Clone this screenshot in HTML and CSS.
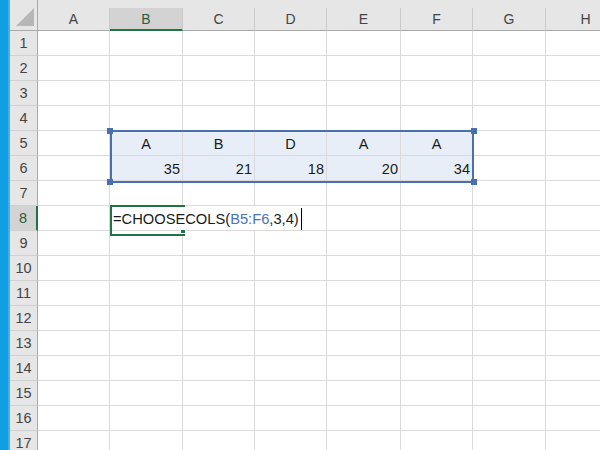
FILE: index.html
```html
<!DOCTYPE html>
<html lang="ja">
<head>
  <meta charset="UTF-8" />
  <title>CHOOSECOLS</title>
  <link rel="stylesheet" href="styles.css">
</head>
<body>

<div class="app">
  <div class="stripe"></div>

  <div class="sheet">
    <div class="head-row">
      <div class="corner"><span class="tri"></span></div>
      <div class="col-h w72">A</div>
      <div class="col-h w73 on">B</div>
      <div class="col-h w72">C</div>
      <div class="col-h w72">D</div>
      <div class="col-h w74">E</div>
      <div class="col-h w72">F</div>
      <div class="col-h w73">G</div>
      <div class="col-h wrest">H</div>
    </div>

    <div class="row"><div class="rh">1</div><div class="c w72"></div><div class="c w73"></div><div class="c w72"></div><div class="c w72"></div><div class="c w74"></div><div class="c w72"></div><div class="c w73"></div><div class="c wrest"></div></div>
    <div class="row"><div class="rh">2</div><div class="c w72"></div><div class="c w73"></div><div class="c w72"></div><div class="c w72"></div><div class="c w74"></div><div class="c w72"></div><div class="c w73"></div><div class="c wrest"></div></div>
    <div class="row"><div class="rh">3</div><div class="c w72"></div><div class="c w73"></div><div class="c w72"></div><div class="c w72"></div><div class="c w74"></div><div class="c w72"></div><div class="c w73"></div><div class="c wrest"></div></div>
    <div class="row"><div class="rh">4</div><div class="c w72"></div><div class="c w73"></div><div class="c w72"></div><div class="c w72"></div><div class="c w74"></div><div class="c w72"></div><div class="c w73"></div><div class="c wrest"></div></div>
    <div class="row">
      <div class="rh">5</div><div class="c w72"></div>
      <div class="c w73 sel mid">A</div>
      <div class="c w72 sel mid">B</div>
      <div class="c w72 sel mid">D</div>
      <div class="c w74 sel mid">A</div>
      <div class="c w72 sel mid">A</div>
      <div class="c w73"></div><div class="c wrest"></div>
    </div>
    <div class="row">
      <div class="rh">6</div><div class="c w72"></div>
      <div class="c w73 sel num">35</div>
      <div class="c w72 sel num">21</div>
      <div class="c w72 sel num">18</div>
      <div class="c w74 sel num">20</div>
      <div class="c w72 sel num">34</div>
      <div class="c w73"></div><div class="c wrest"></div>
    </div>
    <div class="row"><div class="rh">7</div><div class="c w72"></div><div class="c w73"></div><div class="c w72"></div><div class="c w72"></div><div class="c w74"></div><div class="c w72"></div><div class="c w73"></div><div class="c wrest"></div></div>
    <div class="row">
      <div class="rh on">8</div><div class="c w72"></div>
      <div class="c w73 active">
        <span class="edit">=CHOOSECOLS(<span class="ref">B5:F6</span>,3,4)<span class="caret"></span></span>
        <span class="fill-handle"></span>
      </div>
      <div class="c w72"></div><div class="c w72"></div><div class="c w74"></div><div class="c w72"></div><div class="c w73"></div><div class="c wrest"></div>
    </div>
    <div class="row"><div class="rh">9</div><div class="c w72"></div><div class="c w73"></div><div class="c w72"></div><div class="c w72"></div><div class="c w74"></div><div class="c w72"></div><div class="c w73"></div><div class="c wrest"></div></div>
    <div class="row"><div class="rh">10</div><div class="c w72"></div><div class="c w73"></div><div class="c w72"></div><div class="c w72"></div><div class="c w74"></div><div class="c w72"></div><div class="c w73"></div><div class="c wrest"></div></div>
    <div class="row"><div class="rh">11</div><div class="c w72"></div><div class="c w73"></div><div class="c w72"></div><div class="c w72"></div><div class="c w74"></div><div class="c w72"></div><div class="c w73"></div><div class="c wrest"></div></div>
    <div class="row"><div class="rh">12</div><div class="c w72"></div><div class="c w73"></div><div class="c w72"></div><div class="c w72"></div><div class="c w74"></div><div class="c w72"></div><div class="c w73"></div><div class="c wrest"></div></div>
    <div class="row"><div class="rh">13</div><div class="c w72"></div><div class="c w73"></div><div class="c w72"></div><div class="c w72"></div><div class="c w74"></div><div class="c w72"></div><div class="c w73"></div><div class="c wrest"></div></div>
    <div class="row"><div class="rh">14</div><div class="c w72"></div><div class="c w73"></div><div class="c w72"></div><div class="c w72"></div><div class="c w74"></div><div class="c w72"></div><div class="c w73"></div><div class="c wrest"></div></div>
    <div class="row"><div class="rh">15</div><div class="c w72"></div><div class="c w73"></div><div class="c w72"></div><div class="c w72"></div><div class="c w74"></div><div class="c w72"></div><div class="c w73"></div><div class="c wrest"></div></div>
    <div class="row"><div class="rh">16</div><div class="c w72"></div><div class="c w73"></div><div class="c w72"></div><div class="c w72"></div><div class="c w74"></div><div class="c w72"></div><div class="c w73"></div><div class="c wrest"></div></div>
    <div class="row"><div class="rh">17</div><div class="c w72"></div><div class="c w73"></div><div class="c w72"></div><div class="c w72"></div><div class="c w74"></div><div class="c w72"></div><div class="c w73"></div><div class="c wrest"></div></div>

    <!-- range B5:F6 -->
    <div class="range">
      <span class="hd tl"></span><span class="hd tr"></span>
      <span class="hd bl"></span><span class="hd br"></span>
    </div>
  </div>
</div>

</body>
</html>
```

FILE: styles.css
```css
* {
  box-sizing: border-box;
}
body {
  margin: 0;
  width: 600px;
  height: 450px;
  overflow: hidden;
  background: #ffffff;
  font-family: "Liberation Sans", "Noto Sans CJK JP", sans-serif;
  color: #1a1a1a;
}
.app {
  display: flex;
  height: 450px;
}
.stripe {
  width: 10px;
  flex: none;
  background: #0f9fe2;
  box-shadow: inset -2px 0 0 #3cb4ea;
}
.sheet {
  flex: 1;
  position: relative;
  overflow: hidden;
}

/* headers */
.head-row {
  display: flex;
  height: 31px;
  background: #e6e6e6;
}
.corner {
  width: 28px;
  flex: none;
  display: flex;
  justify-content: flex-end;
  align-items: flex-end;
  padding: 0 3px 4px 0;
  border-right: 1px solid #a9a9a9;
  border-bottom: 1px solid #a9a9a9;
}
.tri {
  width: 18px;
  height: 18px;
  background: #b6b6b6;
  clip-path: polygon(100% 0, 100% 100%, 0 100%);
}
.col-h {
  margin-top: 8px;
  height: 23px;
  flex: none;
  text-align: center;
  line-height: 22px;
  font-size: 14px;
  color: #444;
  border-right: 1px solid #cbcbcb;
  border-bottom: 1px solid #a9a9a9;
}
.col-h.on {
  background: #d3d3d3;
  color: #2b5d40;
  border-bottom: 2px solid #217346;
}

.row {
  display: flex;
  height: 25px;
}
.rh {
  width: 28px;
  flex: none;
  background: #e6e6e6;
  border-right: 1px solid #a9a9a9;
  border-bottom: 1px solid #d0d0d0;
  text-align: center;
  line-height: 25px;
  font-size: 14.5px;
  color: #444;
}
.rh.on {
  background: #d3d3d3;
  color: #2b5d40;
  border-right: 2px solid #217346;
}

/* cells */
.c {
  height: 25px;
  flex: none;
  border-right: 1px solid #dadada;
  border-bottom: 1px solid #dadada;
  font-size: 14.5px;
  line-height: 26px;
  white-space: nowrap;
}
.w72 { width: 72px; }
.w73 { width: 73px; }
.w74 { width: 74px; }
.wrest { width: 80px; }

.sel {
  background: #e8eef8;
}
.mid {
  text-align: center;
}
.num {
  text-align: right;
  padding-right: 2px;
}

/* cell being edited */
.active {
  position: relative;
}
.active::after {
  content: "";
  position: absolute;
  left: 0;
  top: -1px;
  width: 73px;
  height: 27px;
  border: 2px solid #217346;
  border-right: none;
  z-index: 2;
}
.edit {
  position: absolute;
  left: 0;
  top: 0;
  height: 24px;
  padding: 2px 4px 0 3px;
  background: #fff;
  font-size: 14.7px;
  z-index: 1;
  display: flex;
  align-items: center;
}
.ref {
  color: #4a72b8;
}
.caret {
  display: inline-block;
  width: 1px;
  height: 22px;
  margin-left: 2px;
  background: #000;
}
.fill-handle {
  position: absolute;
  left: 70px;
  top: 23px;
  width: 6px;
  height: 5px;
  background: #217346;
  border: 1px solid #fff;
  z-index: 3;
}

/* range outline */
.range {
  position: absolute;
  left: 100px;
  top: 130px;
  width: 364px;
  height: 53px;
  border: 2px solid #4a6fae;
  pointer-events: none;
}
.hd {
  position: absolute;
  width: 6px;
  height: 6px;
  background: #4a6fae;
}
.tl { left: -5px; top: -4px; }
.tr { right: -5px; top: -4px; }
.bl { left: -5px; bottom: -4px; }
.br { right: -5px; bottom: -4px; }
```
